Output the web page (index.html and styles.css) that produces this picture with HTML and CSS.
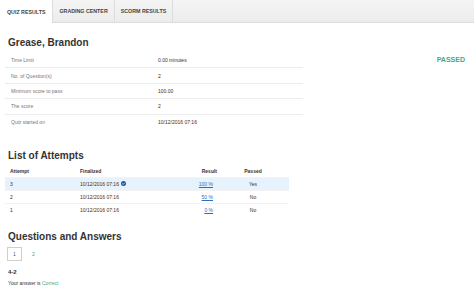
FILE: index.html
```html
<!DOCTYPE html>
<html lang="en">
<head>
    <meta charset="UTF-8">
    <meta name="viewport" content="width=device-width, initial-scale=1.0">
    <title>Quiz Results</title>
    <link rel="stylesheet" href="styles.css">
</head>
<body>
    <!-- Tabs -->
    <div class="tabs">
        <div class="tab active">Quiz Results</div>
        <div class="tab">Grading Center</div>
        <div class="tab">Scorm Results</div>
    </div>

    <div class="content">
        <h2 class="section-title">Grease, Brandon</h2>

        <div class="summary">
            <table class="info-table">
                <tr><td class="label">Time Limit</td><td>0.00 minutes</td></tr>
                <tr><td class="label">No. of Question(s)</td><td>2</td></tr>
                <tr><td class="label">Minimum score to pass</td><td>100.00</td></tr>
                <tr><td class="label">The score</td><td>2</td></tr>
                <tr><td class="label">Quiz started on</td><td>10/12/2016 07:16</td></tr>
            </table>
            <div class="status">PASSED</div>
        </div>

        <h2 class="section-title attempts-title">List of Attempts</h2>
        <table class="attempts-table">
            <thead>
                <tr>
                    <th class="col-attempt">Attempt</th>
                    <th class="col-final">Finalized</th>
                    <th class="col-result">Result</th>
                    <th class="col-passed">Passed</th>
                </tr>
            </thead>
            <tbody>
                <tr class="current">
                    <td>3</td>
                    <td>10/12/2016 07:16
                        <svg class="check" viewBox="0 0 10 10" width="5" height="5">
                            <circle cx="5" cy="5" r="5" fill="#1e5a9a"/>
                            <path d="M2.6 5.2 L4.3 6.8 L7.5 3.5" fill="none" stroke="#fff" stroke-width="1.5"/>
                        </svg>
                    </td>
                    <td class="col-result"><a href="#">100 %</a></td>
                    <td class="col-passed">Yes</td>
                </tr>
                <tr>
                    <td>2</td>
                    <td>10/12/2016 07:16</td>
                    <td class="col-result"><a href="#">50 %</a></td>
                    <td class="col-passed">No</td>
                </tr>
                <tr>
                    <td>1</td>
                    <td>10/12/2016 07:16</td>
                    <td class="col-result"><a href="#">0 %</a></td>
                    <td class="col-passed">No</td>
                </tr>
            </tbody>
        </table>

        <h2 class="section-title qa-title">Questions and Answers</h2>
        <div class="pager">
            <span class="page active">1</span>
            <span class="page">2</span>
        </div>

        <div class="question">4-2</div>
        <div class="answer">Your answer is <span class="correct">Correct</span></div>
    </div>
</body>
</html>
```

FILE: styles.css
```css
body {
    margin: 0;
    font-family: "Liberation Sans", Arial, sans-serif;
    color: #333;
    background: #fff;
}
.tabs {
    display: flex;
    height: 22px;
    background: linear-gradient(#f4f4f4, #ececec);
    border-bottom: 1px solid #dcdcdc;
}
.tab {
    display: flex;
    align-items: center;
    padding: 0 6px;
    font-size: 5.3px;
    font-weight: bold;
    text-transform: uppercase;
    color: #444;
    border-right: 1px solid #dcdcdc;
}
.tab.active {
    background: #fff;
    height: 23px;
    padding: 0 7px;
}
.content {
    padding: 0 9px 0 0;
}
.section-title {
    margin: 14px 0 0 8px;
    font-size: 10px;
    line-height: 12px;
    font-weight: bold;
    color: #333;
}
.summary {
    display: flex;
    justify-content: space-between;
    align-items: flex-start;
    margin-top: 4px;
}
.info-table {
    width: 298px;
    margin-left: 5px;
    border-collapse: collapse;
    font-size: 5px;
}
.info-table td {
    height: 14.4px;
    padding: 0;
    border-top: 1px solid #ececec;
}
.info-table tr:first-child td {
    border-top: none;
}
.info-table td.label {
    width: 147px;
    padding-left: 6px;
    color: #777;
}
.status {
    margin-top: 3px;
    font-size: 7px;
    font-weight: bold;
    color: #45a888;
}
.attempts-title {
    margin-top: 21px;
}
.attempts-table {
    width: 284px;
    margin: 3px 0 0 5px;
    border-collapse: collapse;
    table-layout: fixed;
    font-size: 5px;
}
.attempts-table th, .attempts-table td {
    height: 12px;
    padding: 0;
    text-align: left;
    border-top: 1px solid #f3f3f3;
}
.attempts-table th {
    font-weight: bold;
    color: #333;
    border-top: none;
}
.attempts-table td:first-child, .attempts-table th:first-child {
    padding-left: 5px;
}
.attempts-table .col-attempt { width: 70px; }
.attempts-table .col-final { width: 95px; }
.attempts-table .col-result {
    width: 42px;
    text-align: right;
}
.attempts-table td.col-result {
    padding-right: 4px;
}
.attempts-table .col-passed {
    text-align: center;
}
.attempts-table tr.current td {
    background: #e6f2fc;
}
.attempts-table a {
    color: #2c6fba;
}
.check {
    vertical-align: -0.5px;
    margin-left: 1px;
}
.qa-title {
    margin-top: 15px;
}
.pager {
    display: flex;
    align-items: center;
    margin: 4px 0 0 7px;
    font-size: 5px;
}
.page {
    display: flex;
    align-items: center;
    justify-content: center;
    width: 15px;
    height: 14px;
    box-sizing: border-box;
    color: #45a888;
}
.page.active {
    border: 1px solid #cfcfcf;
    color: #3a6470;
}
.page + .page {
    margin-left: 4px;
}
.question {
    margin: 7px 0 0 8px;
    font-size: 6px;
    font-weight: bold;
    line-height: 8px;
}
.answer {
    margin: 3px 0 0 8px;
    font-size: 5px;
    line-height: 8px;
}
.correct {
    color: #45a888;
}
```
